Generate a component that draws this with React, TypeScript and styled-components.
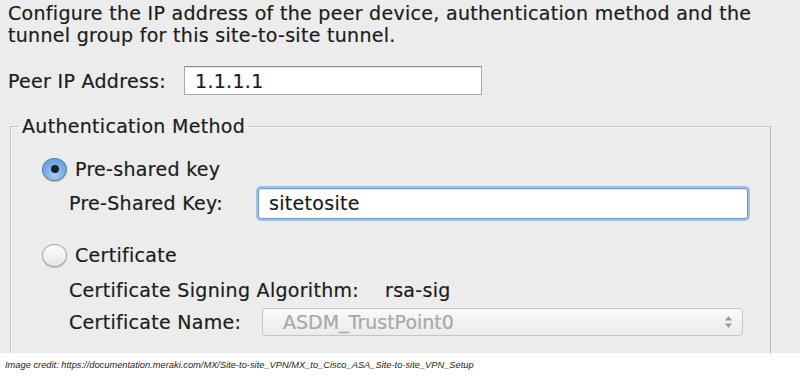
import React from 'react';
import styled, { createGlobalStyle } from 'styled-components';

const GlobalStyle = createGlobalStyle`
  html, body {
    margin: 0;
    padding: 0;
    background: #ffffff;
  }
  body {
    font-family: "DejaVu Sans", "Liberation Sans", sans-serif;
    color: #1b1b1b;
  }
`;

const Screen = styled.div`
  height: 353px;
  overflow: hidden;
  background: #ececec;
  padding: 2px 0 0 8px;
  box-sizing: border-box;
  font-size: 19px;
  letter-spacing: 0.3px;
  -webkit-text-stroke: 0.2px;
`;

const Intro = styled.p`
  margin: 0;
  line-height: 22px;
  width: 770px;
`;

const FieldRow = styled.div`
  display: flex;
  align-items: center;
  margin-top: 20px;
  height: 29px;
`;

const Label = styled.span<{ $width?: number }>`
  display: inline-block;
  width: ${(p) => (p.$width ? `${p.$width}px` : 'auto')};
  flex: none;
  white-space: nowrap;
`;

const TextInput = styled.div<{ $width: number; $focused?: boolean }>`
  box-sizing: border-box;
  width: ${(p) => p.$width}px;
  height: ${(p) => (p.$focused ? 31 : 29)}px;
  background: #ffffff;
  padding-left: 10px;
  display: flex;
  align-items: center;
  border: 1px solid ${(p) => (p.$focused ? '#6f9bd0' : '#a9a9a9')};
  border-top-color: ${(p) => (p.$focused ? '#6f9bd0' : '#8e8e8e')};
  border-radius: ${(p) => (p.$focused ? '3px' : '0')};
  box-shadow: ${(p) =>
    p.$focused
      ? '0 0 0 2px #9dc0e8, inset 0 1px 1px rgba(0,0,0,0.12)'
      : 'inset 0 1px 1px rgba(0,0,0,0.1)'};
`;

const GroupBox = styled.fieldset`
  box-sizing: border-box;
  width: 761px;
  height: 320px;
  margin: 19px 0 0 2px;
  padding: 18px 8px 0 8px;
  border: 1px solid #c6c6c6;
  border-right-color: #b9b9b9;
  box-shadow: inset 1px 1px 0 #f6f6f6;
`;

const Legend = styled.legend`
  padding: 0 3px;
  line-height: 24px;
`;

const Row = styled.div<{ $top: number; $h: number; $indent: number }>`
  display: flex;
  align-items: center;
  height: ${(p) => p.$h}px;
  margin-top: ${(p) => p.$top}px;
  padding-left: ${(p) => p.$indent}px;
  white-space: nowrap;
`;

const Radio = styled.span<{ $checked?: boolean }>`
  box-sizing: border-box;
  width: 25px;
  height: 23px;
  border-radius: 50%;
  margin-right: 8px;
  display: flex;
  align-items: center;
  justify-content: center;
  flex: none;
  border: 1px solid ${(p) => (p.$checked ? '#5b7fa8' : '#a3a3a3')};
  background: ${(p) =>
    p.$checked
      ? 'radial-gradient(circle at 50% 75%, #a6cdf2 0%, #7eb1e6 45%, #5d93cf 100%)'
      : 'linear-gradient(#ffffff, #f0f0f0 60%, #e2e2e2)'};
  box-shadow: 0 1px 1px rgba(0, 0, 0, 0.18);

  &::after {
    content: '';
    display: ${(p) => (p.$checked ? 'block' : 'none')};
    width: 8px;
    height: 8px;
    border-radius: 50%;
    background: #17222f;
  }
`;

const Value = styled.span`
  margin-left: 26px;
`;

const Select = styled.div`
  box-sizing: border-box;
  width: 481px;
  height: 28px;
  margin-left: 3px;
  display: flex;
  align-items: center;
  justify-content: space-between;
  padding: 0 9px 0 20px;
  border: 1px solid #c4c4c4;
  border-radius: 4px;
  background: linear-gradient(#fbfbfb, #f1f1f1 55%, #ebebeb);
  color: #a8a8a8;
  letter-spacing: 0;
`;

const Caption = styled.div`
  height: 23px;
  display: flex;
  align-items: center;
  padding-left: 5px;
  font-family: "Liberation Sans", Arial, sans-serif;
  font-style: italic;
  font-size: 9.3px;
  color: #1e1e1e;
`;

const Stepper = () => (
  <svg width="9" height="14" viewBox="0 0 9 14">
    <path d="M4.5 1 L8 5.5 H1 Z" fill="#9a9a9a" />
    <path d="M4.5 13 L8 8.5 H1 Z" fill="#9a9a9a" />
  </svg>
);

export default function App() {
  return (
    <>
      <GlobalStyle />
      <Screen>
        <Intro>
          Configure the IP address of the peer device, authentication method and the tunnel
          group for this site-to-site tunnel.
        </Intro>
        <FieldRow>
          <Label $width={176}>Peer IP Address:</Label>
          <TextInput $width={298}>1.1.1.1</TextInput>
        </FieldRow>

        <GroupBox>
          <Legend>Authentication Method</Legend>
          <Row $top={0} $h={26} $indent={23}>
            <Radio $checked />
            Pre-shared key
          </Row>
          <Row $top={4} $h={34} $indent={50}>
            <Label $width={189}>Pre-Shared Key:</Label>
            <TextInput $width={490} $focused>
              sitetosite
            </TextInput>
          </Row>
          <Row $top={22} $h={26} $indent={23}>
            <Radio />
            Certificate
          </Row>
          <Row $top={10} $h={24} $indent={50}>
            Certificate Signing Algorithm:
            <Value>rsa-sig</Value>
          </Row>
          <Row $top={6} $h={28} $indent={50}>
            <Label $width={190}>Certificate Name:</Label>
            <Select>
              ASDM_TrustPoint0
              <Stepper />
            </Select>
          </Row>
        </GroupBox>
      </Screen>
      <Caption>
        Image credit: https://documentation.meraki.com/MX/Site-to-site_VPN/MX_to_Cisco_ASA_Site-to-site_VPN_Setup
      </Caption>
    </>
  );
}
